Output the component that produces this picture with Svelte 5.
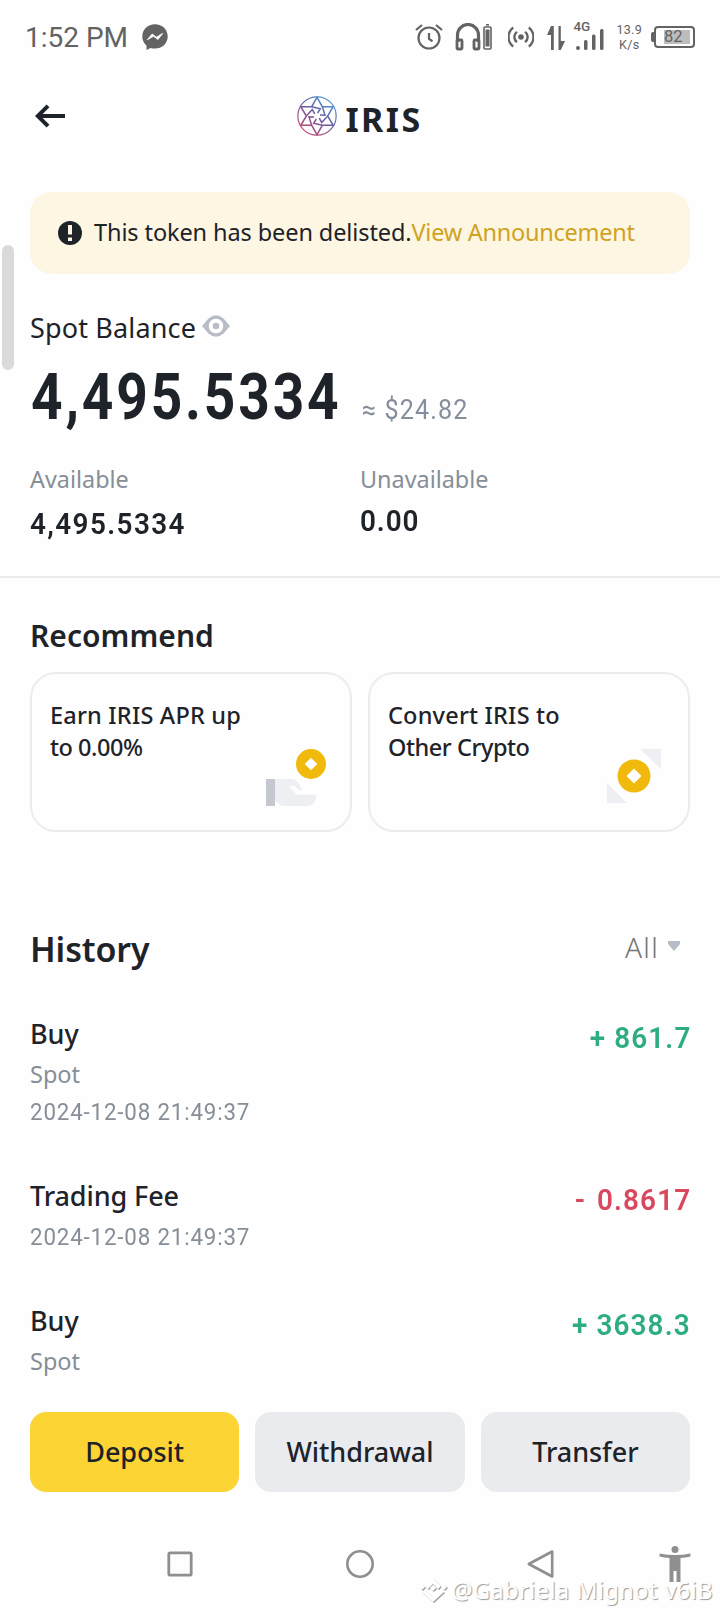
<script lang="ts">
  /**
   * Wallet asset screen: balance, recommendations and history of one token.
   */
  interface Entry {
    title: string
    account?: string
    time?: string
    amount: string
    type: 'in' | 'out'
  }

  const token = 'IRIS'

  const entries: Entry[] = [
    { title: 'Buy', account: 'Spot', time: '2024-12-08 21:49:37', amount: '+ 861.7', type: 'in' },
    { title: 'Trading Fee', time: '2024-12-08 21:49:37', amount: '- 0.8617', type: 'out' },
    { title: 'Buy', account: 'Spot', amount: '+ 3638.3', type: 'in' }
  ]

  // Blades of the token logo, one per star tip
  const blades = [0, 60, 120, 180, 240, 300]
    .map((angle) => {
      const a = (angle * Math.PI) / 180
      const turn = (x: number, y: number) =>
        `${60 + x * Math.cos(a) - y * Math.sin(a)} ${60 + x * Math.sin(a) + y * Math.cos(a)}`
      return `M${turn(-16, -28)}L${turn(10, -22)}L${turn(2, -9)}`
    })
    .join('')
</script>

<div class="screen">
  <header class="status">
    <span class="clock">1:52 PM</span>
    <svg class="messenger" width="26" height="26" viewBox="0 0 26 26">
      <path d="M13 0.3C5.8 0.3 0.3 5.5 0.3 12.5c0 3.7 1.6 6.9 4.2 9.1V26l4-2.1c1.4.5 2.9.7 4.5.7 7.2 0 12.7-5.2 12.7-12.1S20.2.3 13 .3z" fill="#636363" />
      <path d="M5.2 15.8l5-5.8 4.2 3.2 6.4-3.9-4.8 6.2-4.5-3.2z" fill="#fff" stroke="#fff" stroke-width="0.8" stroke-linejoin="round" />
    </svg>

    <div class="indicators">
      <!-- Alarm -->
      <svg width="28" height="28" viewBox="0 0 28 28" fill="none" stroke="#636363" stroke-width="2.2">
        <circle cx="14" cy="15" r="10.5" />
        <path d="M14 10v6l3.5 2.2M1 7l6-5M27 7l-6-5" />
      </svg>
      <!-- Headphones with battery -->
      <svg class="headphones" width="38" height="28" viewBox="0 0 38 28" fill="none" stroke="#636363">
        <path d="M2.5 19V12a10.5 10.5 0 0 1 21 0v7" stroke-width="3.2" />
        <rect x="2" y="17" width="5" height="9" rx="1" stroke-width="2.8" />
        <rect x="19" y="17" width="5" height="9" rx="1" stroke-width="2.8" />
        <rect x="29" y="4" width="7" height="22" rx="1" stroke-width="1.6" />
        <path d="M31 1.8h3" stroke-width="1.6" />
        <path d="M32.5 6.5v17" stroke-width="4" />
      </svg>
      <!-- Hotspot -->
      <svg class="hotspot" width="26" height="24" viewBox="0 0 26 24" fill="none" stroke="#636363" stroke-width="2.3">
        <circle cx="13" cy="12" r="2.8" fill="#636363" stroke="none" />
        <path d="M9 6.8a6.5 6.5 0 0 0 0 10.4M17 6.8a6.5 6.5 0 0 1 0 10.4M5.2 2.5a12 12 0 0 0 0 19M20.8 2.5a12 12 0 0 1 0 19" />
      </svg>
      <!-- Data arrows -->
      <svg class="arrows" width="18" height="24" viewBox="0 0 18 24" fill="#636363">
        <path d="M4 0h2.8v24H4V9H0zM11.5 0h2.3v15H18l-4.2 9h-2.3z" />
      </svg>
      <div class="signal">
        <span>4G</span>
        <svg width="28" height="21" viewBox="0 0 28 21" fill="#636363">
          <rect x="0" y="17" width="4" height="4" rx="2" />
          <rect x="8" y="11" width="3.5" height="10" rx="1.5" />
          <rect x="16" y="5.5" width="3.5" height="15.5" rx="1.5" />
          <rect x="24" y="0" width="3.5" height="21" rx="1.5" />
        </svg>
      </div>
      <div class="speed"><span>13.9</span><span>K/s</span></div>
      <div class="battery"><span>82</span></div>
    </div>
  </header>

  <nav class="titlebar">
    <svg class="back" width="30" height="24" viewBox="0 0 30 24" fill="none" stroke="#1e2329" stroke-width="4">
      <path d="M30 12H3M13 1.8L2.8 12 13 22.2" />
    </svg>
    <div class="token">
      <svg width="40" height="40" viewBox="0 0 120 120" fill="none" stroke="url(#iris)" stroke-width="4.5">
        <defs>
          <linearGradient id="iris" x1="20" y1="110" x2="100" y2="10" gradientUnits="userSpaceOnUse">
            <stop offset="0" stop-color="#c94a70" />
            <stop offset="0.5" stop-color="#6b5a9c" />
            <stop offset="1" stop-color="#4a9bd8" />
          </linearGradient>
        </defs>
        <circle cx="60" cy="60" r="57.5" stroke-width="3.5" />
        <path d="M60 4L76 32L108.5 32L92 60L108.5 88L76 88L60 116L44 88L11.5 88L28 60L11.5 32L44 32Z" />
        <path d={blades} />
      </svg>
      <h1>{token}</h1>
    </div>
  </nav>

  <section class="notice">
    <svg width="24" height="24" viewBox="0 0 24 24">
      <circle cx="12" cy="12" r="12" fill="#1e2329" />
      <path d="M10 4h4v9.5h-4zM10 16.5h4V20h-4z" fill="#fdf6e3" />
    </svg>
    <p>This token has been delisted.<a href="#announcement">View Announcement</a></p>
  </section>

  <section class="balance">
    <div class="balance-label">
      <span>Spot Balance</span>
      <svg width="28" height="22" viewBox="0 0 28 22">
        <path d="M0 11L6.5 3.5Q14-3 21.5 3.5L28 11L21.5 18.5Q14 25 6.5 18.5Z" fill="#b7bdc6" />
        <circle cx="14" cy="11" r="5.3" fill="none" stroke="#fff" stroke-width="4" />
      </svg>
    </div>
    <div class="total">
      <strong>4,495.5334</strong>
      <span>≈ $24.82</span>
    </div>
    <dl class="split">
      <div>
        <dt>Available</dt>
        <dd>4,495.5334</dd>
      </div>
      <div>
        <dt>Unavailable</dt>
        <dd class="zero">0.00</dd>
      </div>
    </dl>
  </section>

  <section class="recommend">
    <h2>Recommend</h2>
    <div class="cards">
      <article class="card">
        <p><span class="lead">Earn {token} APR up</span><br />to 0.00%</p>
        <svg class="earn" width="60" height="57" viewBox="0 0 60 57">
          <rect x="0" y="30" width="9" height="27" fill="#c5c8d0" />
          <path d="M9 30h16c3 0 5 1 6.5 3l5 8.5h-3l-5-4.5-5.5.5 7.5 8h20c0 7-4 11.5-10 11.5H19C15 57 12 55 9 52z" fill="#eeeff2" />
          <circle cx="45" cy="15" r="15" fill="#f0b90b" />
          <path d="M45 8.7l6.3 6.3-6.3 6.3-6.3-6.3z" fill="#fff" />
        </svg>
      </article>
      <article class="card">
        <p><span class="lead">Convert {token} to</span><br />Other Crypto</p>
        <svg class="convert" width="54" height="54" viewBox="0 0 54 54">
          <path d="M33 0h21v20zM0 34v20h20z" fill="#eeeff2" />
          <circle cx="27" cy="27" r="16.5" fill="#f0b90b" />
          <path d="M27 19.5l7.5 7.5-7.5 7.5-7.5-7.5z" fill="#fff" />
        </svg>
      </article>
    </div>
  </section>

  <section class="history">
    <div class="history-head">
      <h2>History</h2>
      <button class="filter">
        <span>All</span>
        <svg width="12" height="10" viewBox="0 0 12 10"><path d="M0 0h12v3L6 10 0 3z" fill="#b7bdc6" /></svg>
      </button>
    </div>

    {#each entries as entry}
      <div class="entry">
        <div>
          <h3>{entry.title}</h3>
          {#if entry.account}<p class="account">{entry.account}</p>{/if}
          {#if entry.time}<p class="time">{entry.time}</p>{/if}
        </div>
        <span class="amount {entry.type}">{entry.amount}</span>
      </div>
    {/each}
  </section>

  <footer>
    <div class="actions">
      <button class="deposit">Deposit</button>
      <button>Withdrawal</button>
      <button>Transfer</button>
    </div>
    <div class="system-nav">
      <svg width="26" height="26" viewBox="0 0 26 26" fill="none" stroke="#8f8f8f" stroke-width="2.8">
        <rect x="1.8" y="1.8" width="22.4" height="22.4" rx="1.5" />
      </svg>
      <svg width="28" height="28" viewBox="0 0 28 28" fill="none" stroke="#8f8f8f" stroke-width="2.6">
        <circle cx="14" cy="14" r="12.7" />
      </svg>
      <svg width="27" height="28" viewBox="0 0 27 28" fill="none" stroke="#8f8f8f" stroke-width="2.6" stroke-linejoin="round">
        <path d="M1.8 14L25.2 1.5v25z" />
      </svg>
      <svg width="32" height="36" viewBox="0 0 32 36" fill="#8f8f8f">
        <circle cx="16" cy="3.5" r="3.5" />
        <path d="M0.5 7.5Q16 10.5 31.5 7.5v3Q27 11.8 21.5 12v24H17.5V25h-3v11h-4V12Q5 11.8 .5 10.5z" />
      </svg>
    </div>
  </footer>

  <div class="scroll-thumb"></div>

  <div class="watermark">
    <svg width="28" height="24" viewBox="0 0 28 24" fill="#fff">
      <path d="M14 0l8 8-3 3-5-5-5 5-3-3zM3 6l3 3-3 3-3-3zM25 6l3 3-3 3-3-3zM14 7l3 3-3 3-3-3zM6 12l8 7 8-7 3 2-11 10L3 14z" />
    </svg>
    <span>@Gabriela Mignot v6iB</span>
  </div>
</div>

<style>
  :global(body) {
    background: #fefefe;
  }

  .screen {
    position: relative;
    display: flex;
    flex-direction: column;
    width: 720px;
    height: 1612px;
    overflow: hidden;
    background: #fefefe;
    color: #1e2329;
    font-family: 'Noto Sans', sans-serif;
  }

  h1, h2, h3, p, dl, dt, dd {
    margin: 0;
    font-weight: 400;
  }

  svg {
    display: block;
    flex: none;
  }

  button {
    padding: 0;
    border: 0;
    font-family: inherit;
    color: inherit;
  }

  /* Status bar */
  .status {
    display: flex;
    align-items: center;
    height: 74px;
    padding: 0 24px 0 25px;
    color: #636363;
    font-family: Roboto, sans-serif;
  }

  .clock {
    font-size: 28px;
  }

  .messenger {
    margin-left: 14px;
  }

  .indicators {
    display: flex;
    align-items: center;
    height: 28px;
    margin-left: auto;
  }

  .headphones {
    margin-left: 12px;
  }

  .hotspot {
    margin-left: 15px;
  }

  .arrows {
    margin: 2px 0 0 13px;
  }

  .signal {
    display: flex;
    flex-direction: column;
    margin-left: 8px;
  }

  .signal span {
    height: 5px;
    font-size: 13.5px;
    font-weight: 500;
    line-height: 5px;
  }

  .signal svg {
    margin-left: 3px;
  }

  .speed {
    display: flex;
    flex-direction: column;
    align-items: center;
    margin-left: 12px;
    font-size: 12.5px;
    line-height: 15px;
    letter-spacing: 0.3px;
  }

  .battery {
    position: relative;
    box-sizing: border-box;
    width: 41px;
    height: 22px;
    margin: 0 1px 0 12px;
    padding: 2px 3px 2px 8px;
    border: 2px solid #636363;
    border-radius: 4px;
  }

  .battery::before {
    position: absolute;
    top: 4px;
    left: -5px;
    width: 3px;
    height: 10px;
    border-radius: 2px 0 0 2px;
    background: #636363;
    content: '';
  }

  .battery span {
    display: block;
    height: 14px;
    background: #bdbdbd;
    font-size: 16.5px;
    line-height: 14px;
  }

  /* Title bar */
  .titlebar {
    display: grid;
    grid-template-columns: 120px 1fr 120px;
    align-items: center;
    height: 84px;
  }

  .back {
    margin-left: 35px;
  }

  .token {
    display: flex;
    align-items: center;
    justify-content: center;
    gap: 8px;
  }

  h1 {
    padding-top: 5px;
    font-size: 34px;
    font-weight: 700;
    line-height: 44px;
    letter-spacing: 2.4px;
  }

  /* Delisting notice */
  .notice {
    display: flex;
    align-items: center;
    gap: 12px;
    box-sizing: border-box;
    height: 82px;
    margin: 34px 30px 0;
    padding-left: 28px;
    border-radius: 22px;
    background: #fdf6e3;
  }

  .notice p {
    padding-bottom: 2px;
    font-size: 23.5px;
    line-height: 32px;
    letter-spacing: -0.1px;
    white-space: nowrap;
  }

  .notice a {
    color: #d0a21d;
    letter-spacing: -0.26px;
    text-decoration: none;
  }

  /* Balance */
  .balance {
    box-sizing: border-box;
    height: 304px;
    padding: 33px 30px 0;
    border-bottom: 2px solid #eaebed;
  }

  .balance-label {
    display: flex;
    align-items: center;
    gap: 6px;
    height: 40px;
    font-size: 27px;
    line-height: 40px;
    letter-spacing: 0.15px;
  }

  .balance-label span {
    padding-top: 2px;
  }

  .balance-label svg {
    margin-bottom: 3px;
  }

  .total {
    display: flex;
    align-items: baseline;
    gap: 23px;
    height: 79px;
    margin-top: 11px;
    padding-left: 1px;
    font-family: Roboto, sans-serif;
    line-height: 79px;
  }

  /* Figures are set narrow and loosely spaced */
  .total strong,
  .total span,
  dd,
  .time,
  .amount {
    transform: scaleX(0.93);
    transform-origin: left;
  }

  .total strong {
    width: 308px;
    font-size: 64px;
    font-weight: 700;
    letter-spacing: 3.3px;
    transform: scaleX(0.86);
  }

  .total span {
    color: #848e9c;
    font-size: 27px;
    letter-spacing: 1.2px;
  }

  .split {
    display: grid;
    grid-template-columns: 1fr 1fr;
    margin-top: 26px;
  }

  dt {
    color: #868e98;
    font-size: 23.4px;
    line-height: 32px;
  }

  dd {
    margin-top: 11px;
    font-family: Roboto, sans-serif;
    font-size: 30px;
    font-weight: 600;
    line-height: 36px;
    letter-spacing: 1.5px;
  }

  dd.zero {
    margin-top: 8px;
    letter-spacing: 1px;
  }

  /* Recommend */
  .recommend {
    padding: 38px 30px 0;
  }

  h2 {
    font-weight: 600;
  }

  .recommend h2 {
    font-size: 30px;
    line-height: 40px;
    letter-spacing: 0.05px;
  }

  .cards {
    display: grid;
    grid-template-columns: 1fr 1fr;
    gap: 16px;
    margin-top: 16px;
  }

  .card {
    display: flex;
    justify-content: space-between;
    box-sizing: border-box;
    height: 160px;
    padding: 25px 24px 24px 18px;
    border: 2px solid #ececee;
    border-radius: 26px;
  }

  .card p {
    font-size: 23.5px;
    font-weight: 500;
    line-height: 32px;
    letter-spacing: -0.45px;
    white-space: nowrap;
  }

  .card .lead {
    letter-spacing: 0.2px;
  }

  .earn {
    align-self: flex-end;
  }

  .convert {
    align-self: flex-end;
    margin: 0 3px 3px 0;
  }

  /* History */
  .history {
    flex: 1;
    min-height: 0;
    overflow: hidden;
    padding: 95px 30px 0;
  }

  .history-head {
    display: flex;
    justify-content: space-between;
    margin-bottom: 45px;
  }

  .history-head h2 {
    font-size: 34px;
    line-height: 44px;
    letter-spacing: -0.1px;
  }

  .filter {
    display: flex;
    align-items: center;
    gap: 9px;
    height: 40px;
    padding-right: 10px;
    background: none;
    color: #747474;
    font-size: 28px;
    font-weight: 300;
    letter-spacing: 1.3px;
  }

  .filter svg {
    margin-bottom: 2px;
  }

  .entry {
    display: flex;
    justify-content: space-between;
    padding-bottom: 46px;
  }

  h3 {
    margin-bottom: 4px;
    font-size: 27px;
    font-weight: 500;
    line-height: 36px;
    letter-spacing: -0.1px;
  }

  .account {
    color: #868e98;
    font-size: 23.5px;
    line-height: 37px;
  }

  .time {
    color: #868e98;
    font-family: Roboto, sans-serif;
    font-size: 24px;
    line-height: 39px;
    letter-spacing: 0.9px;
  }

  .amount {
    margin-right: -1px;
    padding-top: 4px;
    font-family: Roboto, sans-serif;
    font-size: 30px;
    font-weight: 600;
    line-height: 36px;
    letter-spacing: 1.2px;
    transform-origin: right;
  }

  .in {
    color: #2ead82;
  }

  .out {
    color: #d9485f;
    word-spacing: 3px;
  }

  /* Bottom actions and system navigation */
  footer {
    height: 200px;
  }

  .actions {
    display: grid;
    grid-template-columns: repeat(3, 1fr);
    gap: 16px;
    padding: 0 30px;
  }

  .actions button {
    height: 80px;
    padding-bottom: 2px;
    border-radius: 16px;
    background: #eaebef;
    font-size: 27px;
    font-weight: 500;
    letter-spacing: -0.05px;
  }

  .actions .deposit {
    background: #fcd535;
  }

  .system-nav {
    display: grid;
    grid-template-columns: 180px 180px 180px 90px;
    justify-content: center;
    justify-items: center;
    align-items: center;
    height: 36px;
    margin-top: 54px;
    padding-left: 90px;
  }

  /* Overlays */
  .scroll-thumb {
    position: absolute;
    top: 245px;
    left: 2px;
    width: 12px;
    height: 125px;
    border-radius: 6px;
    background: #dadada;
  }

  .watermark {
    position: absolute;
    right: 7px;
    bottom: 6px;
    display: flex;
    align-items: center;
    gap: 4px;
    color: #fff;
    font-size: 23.5px;
    line-height: 32px;
    letter-spacing: 0.45px;
    text-shadow: 1px 1px 1px #999;
    white-space: nowrap;
  }

  .watermark svg {
    filter: drop-shadow(1px 1px 0.5px #999);
  }
</style>
